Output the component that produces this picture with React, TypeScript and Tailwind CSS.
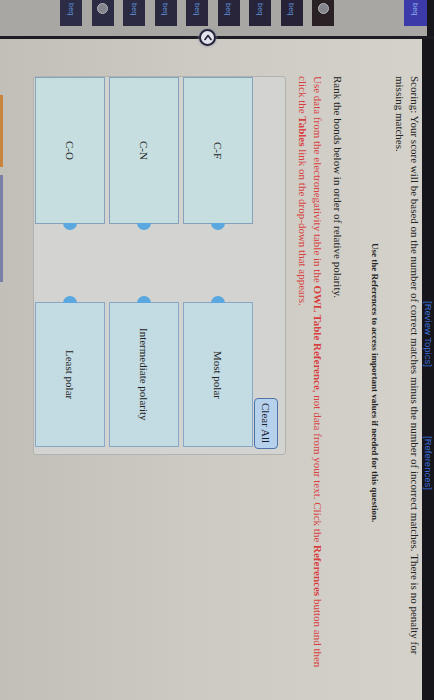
import React from "react";

type TabKind = "beq" | "icon";

function Tab({ kind, tone }: { kind: TabKind; tone: string }) {
  return (
    <div className={`flex h-[26px] w-[22px] shrink-0 flex-row items-center self-start pt-[3px] ${tone}`}>
      {kind === "beq" ? (
        <span className="font-['Liberation_Sans',sans-serif] text-[7.5px] leading-none text-[#5e8fd6]">beq</span>
      ) : (
        <span className="block h-[11px] w-[11px] rounded-full border border-[#b4b5bb] bg-[#85868d]" />
      )}
    </div>
  );
}

export default function App() {
  const darkTabs: { kind: TabKind; tone: string }[] = [
    { kind: "icon", tone: "bg-[#2a2124]" },
    { kind: "beq", tone: "bg-[#272235]" },
    { kind: "beq", tone: "bg-[#272339]" },
    { kind: "beq", tone: "bg-[#28253b]" },
    { kind: "beq", tone: "bg-[#29263d]" },
    { kind: "beq", tone: "bg-[#2a283f]" },
    { kind: "beq", tone: "bg-[#2b2a42]" },
    { kind: "icon", tone: "bg-[#2b2b44]" },
    { kind: "beq", tone: "bg-[#2c2c46]" },
  ];
  const rows = [
    { item: "C-F", zone: "Most polar" },
    { item: "C-N", zone: "Intermediate polarity" },
    { item: "C-O", zone: "Least polar" },
  ];
  return (
    <div className="flex h-[700px] w-[434px] flex-row overflow-hidden bg-[linear-gradient(90deg,#c1bfb8,#cccac2_45%,#d4d2ca)] font-['Liberation_Serif',serif] text-[#222222] [writing-mode:vertical-rl]">
      {/* question navigation bar */}
      <div className="relative flex h-[39px] w-full shrink-0 flex-col border-b-[3px] border-[#1c1c22] bg-[#a9a7a3]">
        <div className="h-full w-[7px] shrink-0 bg-[#17161b]" />
        <div className="flex h-[26px] w-[23px] shrink-0 flex-row items-center self-start bg-[#3b3aa8] pt-[3px]">
          <span className="font-['Liberation_Sans',sans-serif] text-[7.5px] leading-none text-[#8fb0ee]">beq</span>
        </div>
        <div className="w-[70px] shrink-0" />
        <div className="flex flex-col gap-[9.5px]">
          {darkTabs.map((t, i) => (
            <Tab key={i} kind={t.kind} tone={t.tone} />
          ))}
        </div>
        <div className="absolute left-[199px] top-[29px] flex h-[17px] w-[17px] items-center justify-center rounded-full border-2 border-[#23233a] bg-[#e3e3ec] shadow-[0_0_3px_#8c8ca8]">
          <svg width="8" height="7" viewBox="0 0 8 7">
            <path d="M1 5.5 L4 1.5 L7 5.5" stroke="#20203a" strokeWidth="1.6" fill="none" strokeLinecap="round" strokeLinejoin="round" />
          </svg>
        </div>
      </div>

      {/* main page */}
      <div className="flex min-h-0 flex-1 flex-col">
        <div className="flex h-full w-[12px] shrink-0 flex-row items-center bg-[#16151b] pt-[262px] font-['Liberation_Sans',sans-serif] text-[9.5px] leading-[12px] text-[#3d70dc]">
          <span className="h-[135px]">[Review Topics]</span>
          <span>[References]</span>
        </div>

        <div className="h-full min-w-0 flex-1 pb-[10px] pt-[37px]">
          <p className="text-[11px] leading-[15px]">
            Scoring: Your score will be based on the number of correct matches minus the number of incorrect matches. There is no penalty for missing matches.
          </p>
          <p className="mr-[12px] text-center text-[9px] font-bold leading-[11px]">
            Use the References to access important values if needed for this question.
          </p>
          <p className="mr-[24px] text-[11px] leading-[15px]">Rank the bonds below in order of relative polarity.</p>
          <p className="mr-[5px] text-[11px] leading-[15px] text-[#d8403f]">
            Use data from the electronegativity table in the <b>OWL Table Reference</b>, not data from your text. Click the <b>References</b> button and then click the <b>Tables</b> link on the drop-down that appears.
          </p>

          <div className="mr-[9.5px] flex h-[379px] w-[253px] flex-col rounded-[3px] border border-[#b2b2b0] bg-[#d3d3d1]">
            <div className="mr-[7px] flex w-[24px] shrink-0 flex-row justify-end pb-[5px]">
              <div className="flex h-[51px] w-[24px] flex-row items-center justify-center rounded-[4px] border border-[#4f73a6] bg-[#b6d1ec] text-[11px] leading-none text-[#1b1b2a]">
                Clear All
              </div>
            </div>
            <div className="mr-[1px] flex flex-col gap-[4px]">
              {rows.map((r) => (
                <div key={r.item} className="flex w-[70px] flex-row">
                  <div className="relative flex h-[147px] w-[70px] flex-row items-center justify-center border border-[#86a2ba] bg-[#c6dedf] text-[11px] leading-none">
                    {r.item}
                    <span className="absolute left-1/2 top-full h-[7px] w-[14px] -translate-x-1/2 bg-[#5ba7e0] [border-radius:0_0_7px_7px]" />
                  </div>
                  <div className="relative mt-[78px] flex h-[145px] w-[70px] flex-row items-center justify-center border border-[#89a6c2] bg-[#c3dbe3] text-[11px] leading-none">
                    {r.zone}
                    <span className="absolute bottom-full left-1/2 h-[7px] w-[14px] -translate-x-1/2 bg-[#5ba7e0] [border-radius:7px_7px_0_0]" />
                  </div>
                </div>
              ))}
            </div>
          </div>

          <div className="ml-0 mr-[30px] flex w-[3px] flex-row">
            <span className="mt-[19px] block h-[72px] w-[3px] bg-[#c8843f]" />
            <span className="mt-[8px] block h-[107px] w-[3px] bg-[#7b7ea6]" />
          </div>
        </div>
      </div>
    </div>
  );
}
